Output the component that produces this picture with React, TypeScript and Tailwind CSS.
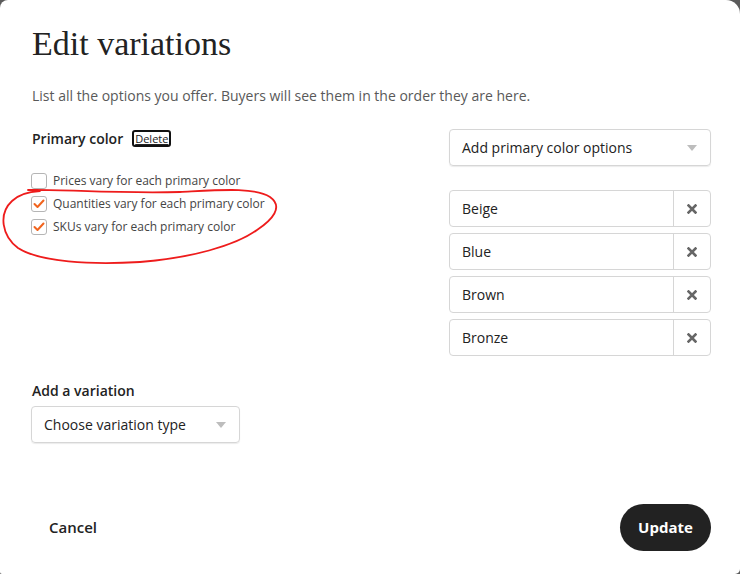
import { useState } from "react"

const sans = { fontFamily: '"Open Sans", "Liberation Sans", Arial, sans-serif' }

function Caret() {
  return (
    <svg width="10" height="6" viewBox="0 0 10 6" className="shrink-0">
      <path d="M0 0 L10 0 L5 6 Z" fill="#bdbdbd" />
    </svg>
  )
}

function CheckRow({ label, checked }: { label: string; checked: boolean }) {
  return (
    <label className="flex items-center gap-[6px] h-[23px] -ml-[1px]">
      <span className="w-[16px] h-[16px] rounded-[3px] border border-[#b5b5b5] bg-white flex items-center justify-center">
        {checked && (
          <svg width="12" height="10" viewBox="0 0 12 10">
            <path d="M1.5 5 L4.5 8 L10.5 1.5" fill="none" stroke="#f1641e" strokeWidth="2" strokeLinecap="round" strokeLinejoin="round" />
          </svg>
        )}
      </span>
      <span className="text-[12px] text-[#444]">{label}</span>
    </label>
  )
}

function OptionRow({ name }: { name: string }) {
  return (
    <div className="flex h-[37px] border border-[#d6d6d6] rounded-[4px] bg-white">
      <div className="flex-1 flex items-center pl-[12px] text-[14px] text-[#222]">{name}</div>
      <button className="w-[37px] border-l border-[#d6d6d6] flex items-center justify-center">
        <svg width="10" height="10" viewBox="0 0 10 10">
          <path d="M1.5 1.5 L8.5 8.5 M8.5 1.5 L1.5 8.5" stroke="#666" strokeWidth="2.6" strokeLinecap="square" />
        </svg>
      </button>
    </div>
  )
}

export default function App() {
  const [options] = useState(["Beige", "Blue", "Brown", "Bronze"])

  return (
    <div className="w-[740px] h-[574px] bg-[#5b5b5b] overflow-hidden" style={sans}>
      <div className="relative h-full bg-white rounded-tl-[8px] rounded-tr-[14px] rounded-br-[5px] rounded-bl-[2px] flex flex-col pl-[32px] pr-[29px]">
        <h1
          className="mt-[22px] text-[34px] leading-[44px] text-[#222]"
          style={{ fontFamily: '"Liberation Serif", "Times New Roman", serif' }}
        >
          Edit variations
        </h1>
        <p className="mt-[20px] text-[14px] leading-[20px] text-[#595959]">
          List all the options you offer. Buyers will see them in the order they are here.
        </p>

        <div className="mt-[23px] flex">
          <div className="flex-1">
            <div className="flex items-center h-[20px] mt-[-1px]">
              <span className="text-[14px] font-semibold text-[#222]">Primary color</span>
              <button className="ml-[9px] text-[11px] leading-[13px] px-[1px] text-[#222] underline border-2 border-[#111] rounded-[3px]">
                Delete
              </button>
            </div>
            <div className="mt-[21px] flex flex-col">
              <CheckRow label="Prices vary for each primary color" checked={false} />
              <CheckRow label="Quantities vary for each primary color" checked />
              <CheckRow label="SKUs vary for each primary color" checked />
            </div>
          </div>

          <div className="w-[262px] flex flex-col">
            <div className="h-[37px] border border-[#d6d6d6] rounded-[4px] shadow-[0_1px_1px_rgba(0,0,0,0.08)] flex items-center justify-between pl-[12px] pr-[13px] text-[14px] text-[#222]">
              <span>Add primary color options</span>
              <Caret />
            </div>
            <div className="mt-[24px] flex flex-col gap-[6px]">
              {options.map((o) => (
                <OptionRow key={o} name={o} />
              ))}
            </div>
          </div>
        </div>

        <div className="mt-[25px]">
          <div className="text-[14px] font-semibold text-[#222] leading-[20px]">Add a variation</div>
          <div className="mt-[5px] w-[209px] h-[37px] border border-[#d6d6d6] rounded-[4px] shadow-[0_1px_1px_rgba(0,0,0,0.08)] flex items-center justify-between pl-[12px] pr-[13px] text-[14px] text-[#222] -ml-[1px]">
            <span>Choose variation type</span>
            <Caret />
          </div>
        </div>

        <div className="mt-auto mb-[23px] flex items-center justify-between">
          <button className="ml-[17px] text-[15px] font-semibold text-[#222]">Cancel</button>
          <button className="h-[47px] w-[91px] rounded-full bg-[#222] text-white text-[15px] font-bold">Update</button>
        </div>

        {/* red marker circle drawn over the checkboxes */}
        <svg className="absolute left-0 top-[180px] pointer-events-none" width="290" height="90" viewBox="0 180 290 90">
          <path
            d="M28 190 C 60 189, 120 194, 180 192 C 220 190, 255 187, 270 197 C 284 207, 272 220, 257 230 C 235 246, 190 258, 140 262 C 90 265, 40 262, 18 248 C 2 236, -2 214, 12 201 C 18 195, 26 192, 40 191"
            fill="none"
            stroke="#ee1c1c"
            strokeWidth="1.8"
            strokeLinecap="round"
          />
        </svg>
      </div>
    </div>
  )
}
